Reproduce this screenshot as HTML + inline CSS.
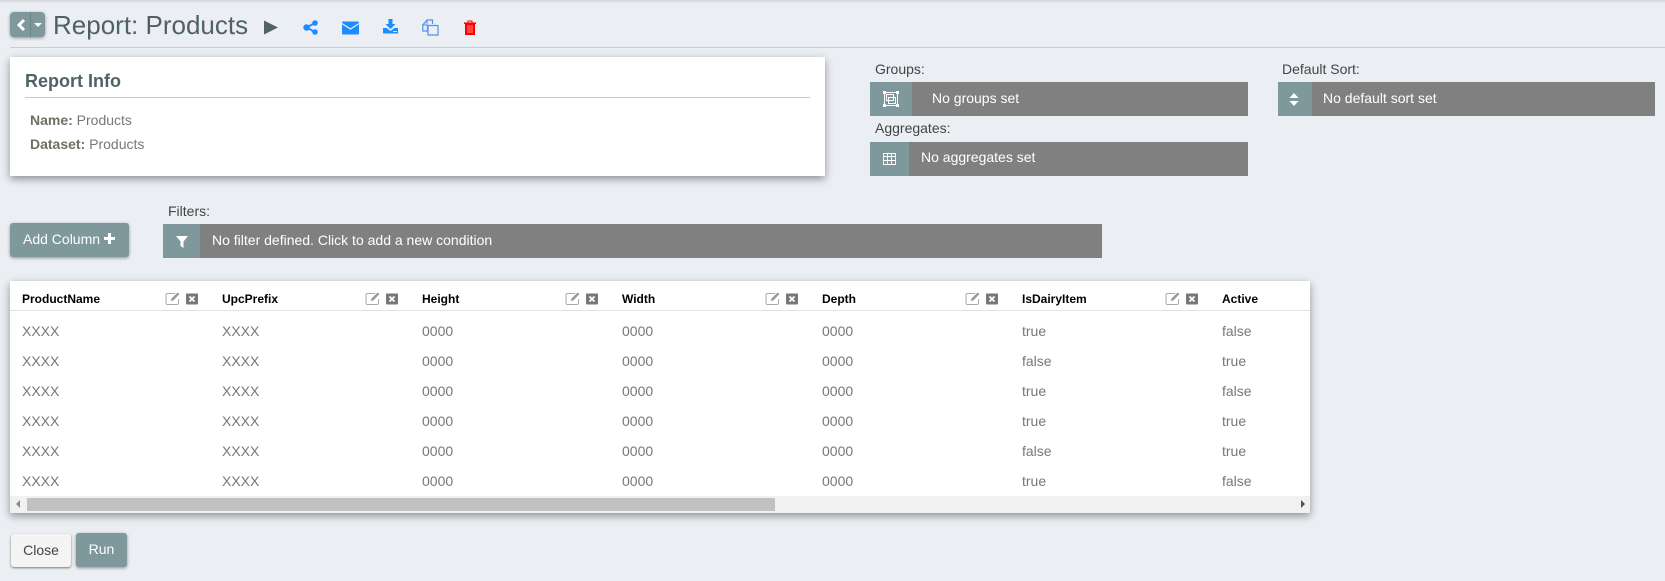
<!DOCTYPE html>
<html><head><meta charset="utf-8"><title>Report: Products</title>
<style>
html,body{margin:0;padding:0}
body{width:1665px;height:581px;background:#ebeef3;position:relative;overflow:hidden;font:14px "Liberation Sans",Arial,sans-serif;color:#444}
.a{position:absolute;white-space:nowrap}
.top{left:0;top:0;width:1665px;height:3px;background:linear-gradient(#cfd2d7,#ebeef3)}
.card{position:absolute;background:#fff;box-shadow:0 3px 8px rgba(0,0,0,.4)}
.bar{position:absolute;background:#808080;color:#fff;height:34px;line-height:32px}
.bar i{position:absolute;left:0;top:0;height:34px;background:#7e989c;display:block}
.bar span{position:absolute;top:0;white-space:nowrap}
.bar svg{position:absolute}
.lbl{color:#444;line-height:16px}
.th{font-weight:bold;font-size:12px;color:#000;line-height:16px}
.td{color:#777;line-height:16px}
.btn{position:absolute;background:#7e989c;color:#fff;border-radius:3px;text-align:center;box-shadow:0 1px 3px rgba(0,0,0,.4)}
</style></head><body>
<div class="a top"></div>

<div class="btn" style="left:10px;top:12px;width:35px;height:25px;border-radius:4px"></div>
<div class="a" style="left:30px;top:12px;width:1px;height:25px;background:#6d8589"></div>
<svg class="a" style="left:15px;top:18px" width="12" height="14" viewBox="0 0 12 14"><path d="M9 2 L4 7 L9 12" fill="none" stroke="#fff" stroke-width="3"/></svg>
<svg class="a" style="left:34px;top:23px" width="8" height="5" viewBox="0 0 8 5"><path d="M0 0H8L4 4Z" fill="#fff"/></svg>
<div class="a" style="left:53px;top:9px;font-size:26px;line-height:32px;color:#4f6268">Report: Products</div>
<svg class="a" style="left:264px;top:20px" width="14" height="15" viewBox="0 0 14 15"><path d="M0 0.5L14 7.5L0 14.5Z" fill="#4f6268"/></svg>
<svg class="a" style="left:303px;top:20px" width="16" height="15" viewBox="0 0 16 15"><g fill="#1e8cff"><circle cx="3.5" cy="7.5" r="3.2"/><circle cx="12" cy="3" r="2.8"/><circle cx="12" cy="12" r="2.8"/></g><path d="M3.5 7.5L12 3M3.5 7.5L12 12" stroke="#1e8cff" stroke-width="2"/></svg>
<svg class="a" style="left:342px;top:21px" width="17" height="14" viewBox="0 0 17 14"><rect width="17" height="13" y="0.5" rx="1" fill="#1e8cff"/><path d="M0 2.5L8.5 8L17 2.5" fill="none" stroke="#ebeef3" stroke-width="1.2"/></svg>
<svg class="a" style="left:383px;top:19px" width="15" height="15" viewBox="0 0 15 15"><path d="M5.5 0H9.5V5H12.5L7.5 10L2.5 5H5.5Z M0 9H3.5L7.5 12L11.5 9H15V14.5H0Z" fill="#1e8cff"/><rect x="10" y="12" width="4" height="1" fill="#cfe3ff"/></svg>
<svg class="a" style="left:422px;top:19px" width="17" height="17" viewBox="0 0 17 17"><path d="M5.5 7V12H0.8V6L5 1H10.5V5" fill="none" stroke="#4a90ff" stroke-width="1.2"/><path d="M6 6.5H16V16H6Z" fill="none" stroke="#4a90ff" stroke-width="1.2"/><path d="M5 1.5V6H1" fill="none" stroke="#4a90ff" stroke-width="1"/></svg>
<svg class="a" style="left:464px;top:20px" width="12" height="15" viewBox="0 0 12 15"><path d="M0 2.5H12V4H11V15H1V4H0Z M3.5 2.5V0.5H8.5V2.5" fill="#f00"/><path d="M4 5V13M6 5V13M8 5V13" stroke="#ff8a8a" stroke-width="1"/><rect x="4.5" y="1.5" width="3" height="1" fill="#ebeef3"/></svg>
<div class="a" style="left:10px;top:47px;width:1655px;height:1px;background:#c9ccd1"></div>

<div class="card" style="left:10px;top:57px;width:815px;height:119px"></div>
<div class="a" style="left:25px;top:70px;font-size:18px;font-weight:bold;line-height:22px;color:#4f6268">Report Info</div>
<div class="a" style="left:25px;top:97px;width:785px;height:1px;background:#c9c9c9"></div>
<div class="a" style="left:30px;top:112px;line-height:16px;color:#777"><b style="color:#6f6f62">Name:</b> Products</div>
<div class="a" style="left:30px;top:136px;line-height:16px;color:#777"><b style="color:#6f6f62">Dataset:</b> Products</div>

<div class="a lbl" style="left:875px;top:61px">Groups:</div>
<div class="bar" style="left:870px;top:82px;width:378px"><i style="width:42px"></i>
<svg style="left:13px;top:9px" width="16" height="16" viewBox="0 0 16 16"><g fill="none" stroke="#fff"><rect x="1.5" y="1.5" width="13" height="13"/><rect x="3.5" y="3.5" width="7" height="6"/><rect x="5.5" y="6.5" width="7" height="6"/></g><g fill="#fff"><rect width="3" height="3"/><rect x="13" width="3" height="3"/><rect y="13" width="3" height="3"/><rect x="13" y="13" width="3" height="3"/></g></svg>
<span style="left:62px">No groups set</span></div>
<div class="a lbl" style="left:1282px;top:61px">Default Sort:</div>
<div class="bar" style="left:1278px;top:82px;width:377px"><i style="width:34px"></i>
<svg style="left:11px;top:11px" width="10" height="13" viewBox="0 0 10 13"><path d="M5 0L9.5 5H.5Z M5 13L9.5 8H.5Z" fill="#fff"/></svg>
<span style="left:45px">No default sort set</span></div>
<div class="a lbl" style="left:875px;top:120px">Aggregates:</div>
<div class="bar" style="left:870px;top:142px;width:378px;line-height:30px"><i style="width:39px"></i>
<svg style="left:13px;top:11px" width="13" height="12" viewBox="0 0 13 12"><path d="M.5.5H12.5V11.5H.5Z M.5 3.5H12.5M.5 7.5H12.5M4.5 .5V11.5M8.5 .5V11.5" fill="none" stroke="#fff" stroke-width=".9"/></svg>
<span style="left:51px">No aggregates set</span></div>

<div class="btn" style="left:10px;top:223px;width:119px;height:34px;line-height:33px;text-align:left;text-indent:13px">Add Column<svg style="position:absolute;left:94px;top:10px" width="11" height="11" viewBox="0 0 11 11"><path d="M4 0H7V4H11V7H7V11H4V7H0V4H4Z" fill="#fff"/></svg></div>
<div class="a lbl" style="left:168px;top:203px">Filters:</div>
<div class="bar" style="left:163px;top:224px;width:939px"><i style="width:37px"></i>
<svg style="left:13px;top:12px" width="12" height="12" viewBox="0 0 12 12"><path d="M0 0H12L7.5 5.5V12L4.5 10V5.5Z" fill="#fff"/></svg>
<span style="left:49px">No filter defined. Click to add a new condition</span></div>

<div class="card" style="left:10px;top:281px;width:1300px;height:232px"></div>
<div class="a" style="left:10px;top:310px;width:1300px;height:1px;background:#e2e2e2"></div>

<div class="a th" style="left:22px;top:291px">ProductName</div>
<div class="a th" style="left:222px;top:291px">UpcPrefix</div>
<div class="a th" style="left:422px;top:291px">Height</div>
<div class="a th" style="left:622px;top:291px">Width</div>
<div class="a th" style="left:822px;top:291px">Depth</div>
<div class="a th" style="left:1022px;top:291px">IsDairyItem</div>
<div class="a th" style="left:1222px;top:291px">Active</div>

<svg class="a" style="left:0;top:0" width="1300" height="320">
<defs><g id="ic"><path d="M10 2.5H2.5A1.5 1.5 0 0 0 1 4V12A1.5 1.5 0 0 0 2.5 13.5H12A1.5 1.5 0 0 0 13.5 12V8" fill="none" stroke="#aaa" stroke-width="1"/><path d="M5.5 10L6.5 7.5L12.5 1.5L14.5 3L8.5 9.2Z" fill="#999"/><rect x="21" y="2.5" width="12" height="11" rx="1" fill="#777"/><path d="M24.5 5.5L29.5 10.5M29.5 5.5L24.5 10.5" stroke="#fff" stroke-width="1.8"/></g></defs>
<use href="#ic" x="165" y="291"/><use href="#ic" x="365" y="291"/><use href="#ic" x="565" y="291"/><use href="#ic" x="765" y="291"/><use href="#ic" x="965" y="291"/><use href="#ic" x="1165" y="291"/>
</svg>

<div class="a td" style="left:22px;top:323px">XXXX</div><div class="a td" style="left:222px;top:323px">XXXX</div><div class="a td" style="left:422px;top:323px">0000</div><div class="a td" style="left:622px;top:323px">0000</div><div class="a td" style="left:822px;top:323px">0000</div><div class="a td" style="left:1022px;top:323px">true</div><div class="a td" style="left:1222px;top:323px">false</div>
<div class="a td" style="left:22px;top:353px">XXXX</div><div class="a td" style="left:222px;top:353px">XXXX</div><div class="a td" style="left:422px;top:353px">0000</div><div class="a td" style="left:622px;top:353px">0000</div><div class="a td" style="left:822px;top:353px">0000</div><div class="a td" style="left:1022px;top:353px">false</div><div class="a td" style="left:1222px;top:353px">true</div>
<div class="a td" style="left:22px;top:383px">XXXX</div><div class="a td" style="left:222px;top:383px">XXXX</div><div class="a td" style="left:422px;top:383px">0000</div><div class="a td" style="left:622px;top:383px">0000</div><div class="a td" style="left:822px;top:383px">0000</div><div class="a td" style="left:1022px;top:383px">true</div><div class="a td" style="left:1222px;top:383px">false</div>
<div class="a td" style="left:22px;top:413px">XXXX</div><div class="a td" style="left:222px;top:413px">XXXX</div><div class="a td" style="left:422px;top:413px">0000</div><div class="a td" style="left:622px;top:413px">0000</div><div class="a td" style="left:822px;top:413px">0000</div><div class="a td" style="left:1022px;top:413px">true</div><div class="a td" style="left:1222px;top:413px">true</div>
<div class="a td" style="left:22px;top:443px">XXXX</div><div class="a td" style="left:222px;top:443px">XXXX</div><div class="a td" style="left:422px;top:443px">0000</div><div class="a td" style="left:622px;top:443px">0000</div><div class="a td" style="left:822px;top:443px">0000</div><div class="a td" style="left:1022px;top:443px">false</div><div class="a td" style="left:1222px;top:443px">true</div>
<div class="a td" style="left:22px;top:473px">XXXX</div><div class="a td" style="left:222px;top:473px">XXXX</div><div class="a td" style="left:422px;top:473px">0000</div><div class="a td" style="left:622px;top:473px">0000</div><div class="a td" style="left:822px;top:473px">0000</div><div class="a td" style="left:1022px;top:473px">true</div><div class="a td" style="left:1222px;top:473px">false</div>

<div class="a" style="left:10px;top:496px;width:1300px;height:17px;background:#f1f1f1"></div>
<div class="a" style="left:27px;top:498px;width:748px;height:13px;background:#c1c1c1"></div>
<svg class="a" style="left:15px;top:500px" width="6" height="9" viewBox="0 0 6 9"><path d="M5 0V8L1 4Z" fill="#8a8a8a"/></svg>
<svg class="a" style="left:1300px;top:500px" width="6" height="9" viewBox="0 0 6 9"><path d="M1 0V8L5 4Z" fill="#505050"/></svg>

<div class="btn" style="left:11px;top:534px;width:60px;height:33px;line-height:33px;background:#f4f4f4;color:#444;box-shadow:0 1px 2px rgba(0,0,0,.5)">Close</div>
<div class="btn" style="left:76px;top:533px;width:51px;height:34px;line-height:33px">Run</div>
</body></html>
